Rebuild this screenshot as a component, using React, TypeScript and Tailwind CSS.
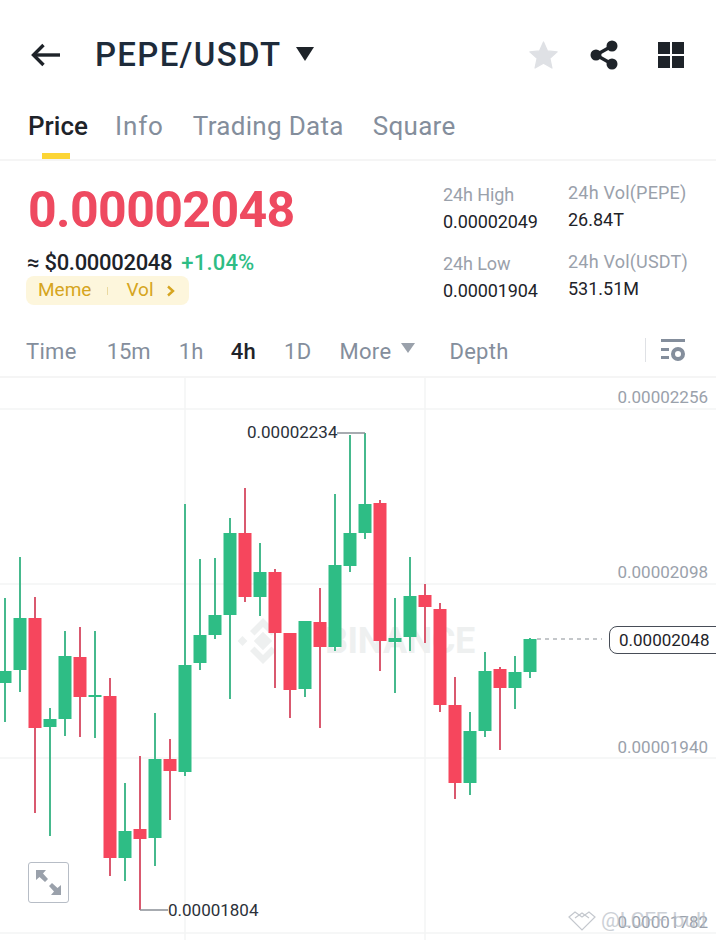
import React from 'react';

type Candle = [number, 'g' | 'r', number, number, number, number];

// x, colour, wick top, body top, body bottom, wick bottom
const candles: Candle[] = [
  [5, 'g', 598, 671, 683, 722],
  [20, 'g', 557, 618, 670, 692],
  [35, 'r', 597, 618, 728, 813],
  [50, 'g', 708, 719, 727, 836],
  [65, 'g', 631, 656, 719, 736],
  [80, 'r', 627, 657, 697, 737],
  [95, 'g', 631, 695, 697, 738],
  [110, 'r', 678, 696, 858, 876],
  [125, 'g', 783, 831, 858, 881],
  [140, 'r', 756, 829, 839, 910],
  [155, 'g', 713, 759, 838, 866],
  [170, 'r', 739, 759, 771, 820],
  [185, 'g', 504, 665, 772, 776],
  [200, 'g', 559, 635, 663, 670],
  [215, 'g', 558, 615, 635, 639],
  [230, 'g', 518, 533, 615, 699],
  [245, 'r', 488, 533, 597, 602],
  [260, 'g', 543, 572, 597, 616],
  [275, 'r', 569, 572, 633, 688],
  [290, 'r', 633, 633, 690, 718],
  [305, 'g', 621, 621, 689, 697],
  [320, 'r', 588, 622, 647, 728],
  [335, 'g', 494, 565, 647, 651],
  [350, 'g', 435, 533, 566, 572],
  [365, 'g', 433, 504, 533, 539],
  [380, 'r', 500, 503, 641, 671],
  [395, 'g', 598, 638, 642, 693],
  [410, 'g', 557, 596, 637, 651],
  [425, 'r', 584, 595, 607, 643],
  [440, 'r', 603, 609, 705, 712],
  [455, 'r', 677, 705, 783, 799],
  [470, 'g', 712, 731, 783, 795],
  [485, 'g', 652, 671, 731, 737],
  [500, 'r', 667, 669, 688, 750],
  [515, 'g', 656, 672, 688, 709],
  [530, 'g', 638, 639, 672, 678],
];

const TOP = 378;

const Chart = () => (
  <svg width="716" height="562" viewBox={`0 ${TOP} 716 562`} className="block">
    {[409, 584, 758, 933].map(y => (
      <line key={y} x1="0" x2="716" y1={y} y2={y} stroke="#f3f4f5" strokeWidth="1.5" />
    ))}
    {[185, 425].map(x => (
      <line key={x} x1={x} x2={x} y1={TOP} y2="940" stroke="#f3f4f5" strokeWidth="1.5" />
    ))}

    {/* watermark */}
    <g fill="#eef0f0" transform="translate(263 641)">
      <rect x="-6.5" y="-6.5" width="13" height="13" transform="rotate(45)" />
      <rect x="-24" y="-3.5" width="7" height="7" transform="rotate(45 -20.5 0)" />
      <path d="M0 -23 L13 -10 L8.5 -5.5 L0 -14 L-8.5 -5.5 L-13 -10 Z" />
      <path d="M0 23 L13 10 L8.5 5.5 L0 14 L-8.5 5.5 L-13 10 Z" />
    </g>
    <text x="325" y="653" fill="#eef0f0" fontSize="36" fontWeight="700" letterSpacing="-0.4" fontFamily="Roboto, sans-serif">BINANCE</text>

    {candles.map(([x, c, wt, bt, bb, wb]) => (
      <g key={x}>
        <rect x={x - 1} y={wt} width="2" height={wb - wt} fill={c === 'g' ? '#46b98d' : '#d9596f'} />
        <rect x={x - 6.5} y={bt} width="13" height={bb - bt} fill={c === 'g' ? '#2ebd85' : '#f6465d'} />
      </g>
    ))}

    {/* high and low markers */}
    <path d="M337 433H365" stroke="#8a8f96" strokeWidth="1.5" fill="none" />
    <path d="M140 910H168" stroke="#8a8f96" strokeWidth="1.5" fill="none" />
    <path d="M537 639H602" stroke="#8a8f96" strokeWidth="1.2" strokeDasharray="4 4" fill="none" />
  </svg>
);

const axis = 'absolute right-[8px] text-[17px] leading-[20px] text-[#9aa1ab]';

export default function App() {
  return (
    <div className="w-[716px] h-[940px] overflow-hidden bg-white text-[#1e2329] font-['Roboto',sans-serif]">
      {/* top bar */}
      <div className="h-[110px] flex items-center pl-[31px]">
        <svg width="29" height="24" viewBox="0 0 29 24" fill="none" stroke="#1e2329" strokeWidth="3.4">
          <path d="M12.5 2 L2.5 12 L12.5 22" />
          <path d="M3 12 H29" />
        </svg>
        <span className="ml-[35px] text-[33px] font-medium text-[#1e2b3a] tracking-[1.3px]">PEPE/USDT</span>
        <svg width="18" height="14" viewBox="0 0 18 14" className="ml-[15px] -mt-[2px]">
          <path d="M0 0H18L9 14Z" fill="#1e2329" />
        </svg>
        <svg width="29" height="29" viewBox="0 0 24 24" className="ml-auto">
          <path d="M12 .8l3.3 7.4 8 .8-6 5.4 1.7 8L12 18.3l-7 4.1 1.7-8-6-5.4 8-.8z" fill="#dfe1e5" stroke="#dfe1e5" strokeLinejoin="round" />
        </svg>
        <svg width="28" height="30" viewBox="0 0 28 30" className="ml-[32px]">
          <path d="M22 6L6 15L22 24" stroke="#1e2329" strokeWidth="3.4" fill="none" />
          <circle cx="22" cy="6" r="5.5" fill="#1e2329" />
          <circle cx="6" cy="15" r="5.5" fill="#1e2329" />
          <circle cx="22" cy="24" r="5.5" fill="#1e2329" />
        </svg>
        <div className="ml-[40px] mr-[32px] grid grid-cols-2 gap-[2px] w-[26px] h-[26px]">
          <div className="bg-[#1e2329]" />
          <div className="bg-[#1e2329]" />
          <div className="bg-[#1e2329]" />
          <div className="bg-[#1e2329]" />
        </div>
      </div>

      {/* tabs */}
      <div className="relative h-[51px] border-b-2 border-[#f5f5f5] flex pl-[28px] text-[26px] leading-[32px] text-[#848e9c] tracking-[0.3px]">
        <span className="text-[#1e2329] font-medium tracking-normal">Price</span>
        <span className="ml-[27px] tracking-[0.9px]">Info</span>
        <span className="ml-[29px]">Trading Data</span>
        <span className="ml-[29px]">Square</span>
        <div className="absolute left-[42px] top-[43px] w-[28px] h-[6px] bg-[#fcd535]" />
      </div>

      {/* price and 24h stats */}
      <div className="h-[157px] flex">
        <div className="w-[443px] pl-[28px]">
          <div className="mt-[17px] h-[64px] text-[50px] leading-[64px] font-bold text-[#ee4a60] tracking-[-0.6px]">0.00002048</div>
          <div className="mt-[5px] flex items-baseline h-[32px] text-[22px] leading-[32px]">
            <span className="-ml-[1px] font-medium tracking-[-0.3px]">≈ $0.00002048</span>
            <span className="ml-[9px] font-medium text-[#2ebd85] tracking-[0.2px]">+1.04%</span>
          </div>
          <div className="-ml-[2px] w-[163px] h-[29px] mt-[-3px] rounded-[8px] bg-[#fdf6dc] flex items-center text-[19px] text-[#d6a520]">
            <span className="ml-[12px]">Meme</span>
            <span className="ml-[16px] w-px h-[8px] bg-[#ead9a0]" />
            <span className="ml-[18px]">Vol</span>
            <svg width="10" height="12" viewBox="0 0 10 12" className="ml-[12px]" fill="none" stroke="#d6a520" strokeWidth="2.4">
              <path d="M2 1.5L7 6L2 10.5" />
            </svg>
          </div>
        </div>
        <div className="w-[125px] pt-[21px] text-[18px] leading-[26px] tracking-[-0.1px]">
          <div className="text-[#9aa1ab]">24h High</div>
          <div className="mt-px">0.00002049</div>
          <div className="mt-[16px] text-[#9aa1ab]">24h Low</div>
          <div className="mt-px">0.00001904</div>
        </div>
        <div className="pt-[19px] text-[18px] leading-[26px]">
          <div className="text-[#9aa1ab] tracking-[0.2px]">24h Vol(PEPE)</div>
          <div className="mt-px">26.84T</div>
          <div className="mt-[16px] text-[#9aa1ab] tracking-[0.2px]">24h Vol(USDT)</div>
          <div className="mt-px">531.51M</div>
        </div>
      </div>

      {/* intervals */}
      <div className="h-[60px] border-b-2 border-[#f5f5f5] flex items-center pl-[26px] pt-[8px] text-[22px] tracking-[0.3px] text-[#848e9c]">
        <span>Time</span>
        <span className="ml-[30px] tracking-normal">15m</span>
        <span className="ml-[28px]">1h</span>
        <span className="ml-[27px] text-[#1e2329] font-medium">4h</span>
        <span className="ml-[28px]">1D</span>
        <span className="ml-[28px]">More</span>
        <svg width="14" height="10" viewBox="0 0 14 10" className="ml-[10px] -mt-[6px]">
          <path d="M0 0H14L7 10Z" fill="#9aa1ab" />
        </svg>
        <span className="ml-[34px]">Depth</span>
        <span className="ml-auto w-px h-[24px] -mt-[2px] bg-[#dfe1e5]" />
        <svg width="24" height="24" viewBox="0 0 24 24" className="ml-[15px] mr-[31px]" fill="#848e9c">
          <rect x="0" y="0" width="24" height="3" />
          <rect x="0" y="9" width="8" height="3" />
          <rect x="0" y="17" width="8" height="3" />
          <circle cx="17" cy="15" r="5" fill="none" stroke="#848e9c" strokeWidth="4" />
        </svg>
      </div>

      {/* chart */}
      <div className="relative">
        <Chart />
        <span className={`${axis} top-[9px]`}>0.00002256</span>
        <span className={`${axis} top-[184px]`}>0.00002098</span>
        <span className={`${axis} top-[359px]`}>0.00001940</span>
        <span className={`${axis} top-[534px]`}>0.00001782</span>
        <span className="absolute left-[247px] top-[44px] text-[17px] leading-[20px] text-[#2b3139]">0.00002234</span>
        <span className="absolute left-[168px] top-[522px] text-[17px] leading-[20px] text-[#2b3139]">0.00001804</span>
        <span className="absolute left-[609px] top-[248px] w-[120px] h-[28px] pl-[9px] rounded-[8px] border border-[#474d57] bg-white text-[17px] leading-[26px] text-[#1e2329]">0.00002048</span>
        <div className="absolute left-[28px] top-[484px] w-[41px] h-[41px] rounded-[3px] border border-[#b7bdc6] bg-white flex items-center justify-center">
          <svg width="25" height="25" viewBox="0 0 25 25" fill="#9aa1ab">
            <path d="M0 0H10L7 3.5L12 9L9 12L3.5 7L0 10Z" />
            <path d="M25 25H15L18 21.5L13 16L16 13L21.5 18L25 15Z" />
          </svg>
        </div>
        {/* square watermark */}
        <div className="absolute left-[568px] top-[530px] flex items-center text-[#b7bdc6]">
          <svg width="28" height="22" viewBox="0 0 28 22" fill="none" stroke="#c4c8ce" strokeWidth="1.2">
            <path d="M1 8L7 3L14 8L21 3L27 8L14 21Z" />
            <path d="M7 9L14 4L21 9" />
          </svg>
          <span className="ml-[5px] text-[21px] leading-[24px] opacity-70">@LCFF bull</span>
        </div>
      </div>
    </div>
  );
}
